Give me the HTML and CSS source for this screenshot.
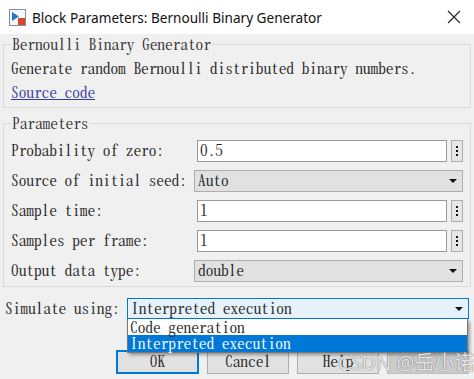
FILE: index.html
```html
<!DOCTYPE html>
<html>
<head>
<meta charset="utf-8">
<link rel="stylesheet" href="styles.css">
</head>
<body>
<div class="window">
  <div class="titlebar">
    <svg class="app-icon" width="19" height="19" viewBox="0 0 19 19">
      <rect x="1.5" y="1.5" width="16" height="16" fill="#f7f7f7" stroke="#7d8fa6"/>
      <polygon points="4,4 4,13 11,8.5" fill="#1f7ad0"/>
      <rect x="10" y="10" width="7" height="7" fill="#d8452a"/>
    </svg>
    <span class="title">Block Parameters: Bernoulli Binary Generator</span>
    <svg class="close" width="14" height="14" viewBox="0 0 14 14">
      <path d="M1 1 L13 13 M13 1 L1 13" stroke="#222" stroke-width="1.1" fill="none"/>
    </svg>
  </div>
  <div class="body mono">
    <fieldset class="group group-info">
      <legend>Bernoulli Binary Generator</legend>
      <p class="line">Generate random Bernoulli distributed binary numbers.</p>
      <p class="line"><a class="link">Source code</a></p>
    </fieldset>
    <fieldset class="group group-params">
      <legend>Parameters</legend>
      <div class="params">
        <span class="label">Probability of zero:</span>
        <div class="field"><span class="input">0.5</span><span class="dots"><i></i><i></i><i></i></span></div>
        <span class="label">Source of initial seed:</span>
        <div class="select">Auto<span class="arrow"></span></div>
        <span class="label">Sample time:</span>
        <div class="field"><span class="input">1</span><span class="dots"><i></i><i></i><i></i></span></div>
        <span class="label">Samples per frame:</span>
        <div class="field"><span class="input">1</span><span class="dots"><i></i><i></i><i></i></span></div>
        <span class="label">Output data type:</span>
        <div class="select">double<span class="arrow"></span></div>
      </div>
    </fieldset>
    <div class="sim-row">
      <span class="sim-label">Simulate using:</span>
      <div class="sim-wrap">
        <div class="select select-active">Interpreted execution<span class="arrow"></span></div>
        <div class="menu">
          <div class="menu-item">Code generation</div>
          <div class="menu-item selected">Interpreted execution</div>
        </div>
      </div>
    </div>
    <div class="buttons">
      <span class="btn btn-default">OK</span>
      <span class="btn">Cancel</span>
      <span class="btn">Help</span>
      <span class="btn btn-disabled">Apply</span>
    </div>
    <div class="watermark">CSDN @岳小诺</div>
  </div>
</div>
</body>
</html>
```
FILE: styles.css
```css
* { box-sizing: border-box; }
html, body { margin: 0; padding: 0; }
body {
  width: 474px;
  height: 379px;
  overflow: hidden;
  background: #f0f0f0;
}
.window { position: relative; height: 379px; }
.titlebar {
  height: 34px;
  background: #fff;
  display: flex;
  align-items: center;
  padding: 0 13px 0 8px;
}
.app-icon { flex: none; margin-right: 5px; }
.title {
  flex: 1;
  font-family: "Noto Sans", sans-serif;
  font-size: 13.6px;
  color: #111;
  white-space: nowrap;
}
.close { flex: none; }

.mono {
  font-family: "Noto Serif CJK SC", "Noto Serif CJK JP", "Liberation Mono", serif;
  font-feature-settings: "hwid" 1;
  font-size: 15.3px;
  color: #262626;
}
.body { position: relative; height: 345px; }

.group {
  margin: 2px 3px 0;
  padding: 0 7px;
  border: 1px solid #d9d9d9;
  min-width: 0;
}
.group legend {
  padding: 0 1px;
  height: 16px;
  line-height: 14px;
  color: #333;
}
.group-info { padding-top: 5px; padding-bottom: 2px; }
.line { margin: 0; height: 24px; line-height: 21px; white-space: nowrap; }
.link { color: #3a3a9e; text-decoration: underline; }

.group-params { margin-top: 7px; padding-top: 9px; padding-bottom: 4px; }
.params {
  display: grid;
  grid-template-columns: 183px 1fr;
  row-gap: 8px;
}
.label { height: 22px; line-height: 19px; white-space: nowrap; }
.field { display: flex; gap: 4px; height: 22px; padding-left: 3px; }
.input {
  flex: 1;
  background: #fff;
  border: 1px solid #9a9a9a;
  line-height: 17px;
  padding-left: 2px;
}
.dots {
  width: 12px;
  border: 1px solid #adadad;
  background: #e6e6e6;
  display: flex;
  flex-direction: column;
  align-items: center;
  justify-content: center;
  gap: 2px;
}
.dots i { display: block; width: 2px; height: 2px; background: #111; }

.select {
  position: relative;
  height: 22px;
  background: #e1e1e1;
  border: 1px solid #adadad;
  line-height: 17px;
  padding-left: 3px;
}
.arrow {
  position: absolute;
  right: 5px;
  top: 8px;
  width: 0;
  height: 0;
  border-left: 4px solid transparent;
  border-right: 4px solid transparent;
  border-top: 4px solid #111;
}

.sim-row {
  display: flex;
  margin-top: 11px;
  padding: 0 5px;
  height: 22px;
}
.sim-label { width: 122px; line-height: 18px; white-space: nowrap; }
.sim-wrap { position: relative; flex: 1; }
.select-active {
  background: #e5f1fb;
  border-color: #0078d7;
  height: 21px;
  line-height: 16px;
}
.menu {
  position: absolute;
  top: 21px;
  left: 0;
  right: 1px;
  border: 1px solid #767676;
  border-top: none;
  background: #fff;
  box-shadow: 2px 2px 3px rgba(0, 0, 0, 0.35);
  z-index: 2;
}
.menu-item { height: 16px; line-height: 14px; padding-left: 2px; white-space: nowrap; }
.menu-item.selected { background: #0078d7; color: #fff; height: 17px; line-height: 15px; }

.buttons {
  display: flex;
  gap: 8px;
  margin-top: 30px;
  padding-left: 116px;
}
.btn {
  width: 82px;
  height: 24px;
  line-height: 19px;
  text-align: center;
  background: #e1e1e1;
  border: 1px solid #adadad;
}
.btn-default { width: 83px; border: 2px solid #0078d7; line-height: 17px; }
.btn-disabled { background: #cccccc; border-color: #bfbfbf; color: #c4c4c4; }

.watermark {
  position: absolute;
  left: 338px;
  top: 316px;
  font-family: "Noto Sans", "Noto Sans CJK SC", sans-serif;
  font-feature-settings: normal;
  font-size: 20px;
  line-height: 22px;
  color: rgba(255, 255, 255, 0.82);
  text-shadow: 0 0 1px #777, 0 0 1px #777;
  z-index: 3;
  white-space: nowrap;
}
```
